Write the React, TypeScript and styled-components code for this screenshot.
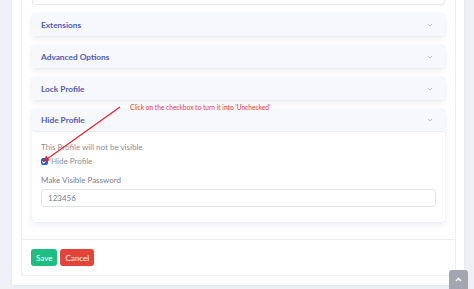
import styled, { createGlobalStyle } from "styled-components";

const GlobalStyle = createGlobalStyle`
  html, body {
    margin: 0;
    padding: 0;
    background: #eef0f5;
    font-family: Lato, "Open Sans", "Liberation Sans", sans-serif;
    overflow: hidden;
  }
`;

const Page = styled.div`
  position: relative;
  width: 474px;
  height: 289px;
  padding-left: 12px;
  box-sizing: border-box;
`;

const OuterCard = styled.div`
  width: 452px;
  height: 285px;
  background: #ffffff;
  padding: 0 8px 9px 9px;
  box-sizing: border-box;
  box-shadow: 0 1px 3px rgba(40, 50, 80, 0.06);
`;

const InnerCard = styled.div`
  height: 276px;
  border: 1px solid #eceef2;
  border-top: none;
  border-radius: 0 0 4px 4px;
  box-sizing: border-box;
  display: flex;
  flex-direction: column;
`;

const Body = styled.div`
  flex: 1;
  padding: 0 10px 0 10px;
  display: flex;
  flex-direction: column;
  gap: 9px;
  border-bottom: 1px solid #eceef2;
`;

const PrevPanel = styled.div`
  height: 5px;
  border: 1px solid #e6e8ee;
  border-top: none;
  border-radius: 0 0 3px 3px;
  box-sizing: border-box;
  margin-bottom: -1px;
`;

const Panel = styled.div`
  background: #ffffff;
  border-radius: 3px;
  box-shadow: 0 3px 6px rgba(60, 70, 110, 0.09), 0 0 1px rgba(60, 70, 110, 0.12);
`;

const PanelHeader = styled.div<{ $open?: boolean }>`
  height: 23px;
  background: #f7f8fb;
  display: flex;
  align-items: center;
  justify-content: space-between;
  padding: 0 12px 0 9px;
  border-radius: 3px;
  border-bottom: ${(p) => (p.$open ? "1px solid #eceef3" : "none")};
  box-sizing: border-box;
`;

const PanelTitle = styled.span`
  font-size: 8.3px;
  font-weight: 700;
  color: #4d5bb0;
`;

const Chevron = () => (
  <svg width="6" height="4" viewBox="0 0 6 4">
    <path d="M1 1 L3 3 L5 1" fill="none" stroke="#b4b8c4" strokeWidth="0.9" />
  </svg>
);

const PanelBody = styled.div`
  height: 90px;
  padding: 10px 9px 0 9px;
  box-sizing: border-box;
`;

const Hint = styled.div`
  font-size: 8px;
  color: #8a8f99;
  line-height: 10px;
`;

const CheckRow = styled.label`
  display: flex;
  align-items: center;
  gap: 2px;
  margin-top: 4px;
  font-size: 8px;
  color: #8a8f99;
  line-height: 10px;
`;

const Check = styled.input`
  width: 7px;
  height: 7px;
  margin: 0 1px 0 0;
  accent-color: #1d62d6;
`;

const FieldLabel = styled.div`
  margin-top: 9px;
  font-size: 8px;
  color: #7c818b;
  line-height: 10px;
`;

const TextInput = styled.div`
  margin-top: 4px;
  height: 18px;
  border: 1px solid #e2e4e9;
  border-radius: 3px;
  padding: 0 6px;
  display: flex;
  align-items: center;
  font-size: 8px;
  color: #7d828c;
  box-sizing: border-box;
  width: 395px;
`;

const Footer = styled.div`
  height: 35px;
  padding: 9px 10px 0 9px;
  display: flex;
  gap: 3px;
  box-sizing: border-box;
`;

const Button = styled.button<{ $variant: "save" | "cancel" }>`
  height: 17px;
  padding: 0 5px;
  border: none;
  border-radius: 3px;
  font-family: inherit;
  font-size: 8px;
  color: #ffffff;
  background: ${(p) => (p.$variant === "save" ? "#1dbe82" : "#e4433a")};
`;

const Annotation = styled.div`
  position: absolute;
  left: 130px;
  top: 103px;
  font-size: 6.6px;
  color: #e0354a;
  white-space: nowrap;
`;

const ArrowLayer = styled.svg`
  position: absolute;
  left: 0;
  top: 0;
  pointer-events: none;
`;

const ScrollTop = styled.div`
  position: absolute;
  left: 449px;
  top: 270px;
  width: 19px;
  height: 24px;
  border-radius: 3px;
  background: #a3a6b0;
  display: flex;
  justify-content: center;
  padding-top: 7px;
  box-sizing: border-box;
`;

const sections = ["Extensions", "Advanced Options", "Lock Profile"];

export default function App() {
  return (
    <>
      <GlobalStyle />
      <Page>
        <OuterCard>
          <InnerCard>
            <Body>
              <PrevPanel />
              {sections.map((s) => (
                <Panel key={s}>
                  <PanelHeader>
                    <PanelTitle>{s}</PanelTitle>
                    <Chevron />
                  </PanelHeader>
                </Panel>
              ))}
              <Panel>
                <PanelHeader $open>
                  <PanelTitle>Hide Profile</PanelTitle>
                  <Chevron />
                </PanelHeader>
                <PanelBody>
                  <Hint>This Profile will not be visible</Hint>
                  <CheckRow>
                    <Check type="checkbox" defaultChecked />
                    Hide Profile
                  </CheckRow>
                  <FieldLabel>Make Visible Password</FieldLabel>
                  <TextInput>123456</TextInput>
                </PanelBody>
              </Panel>
            </Body>
            <Footer>
              <Button $variant="save">Save</Button>
              <Button $variant="cancel">Cancel</Button>
            </Footer>
          </InnerCard>
        </OuterCard>
        <Annotation>Click on the checkbox to turn it into 'Unchecked'</Annotation>
        <ArrowLayer width="474" height="289">
          <line x1="120" y1="107" x2="47" y2="159" stroke="#e0232e" strokeWidth="1.2" />
          <path d="M43 162 L46.2 155.6 L49.6 160.4 Z" fill="#e0232e" />
        </ArrowLayer>
        <ScrollTop>
          <svg width="7" height="5" viewBox="0 0 7 5">
            <path d="M1 4 L3.5 1.5 L6 4" fill="none" stroke="#fff" strokeWidth="1.3" />
          </svg>
        </ScrollTop>
      </Page>
    </>
  );
}
